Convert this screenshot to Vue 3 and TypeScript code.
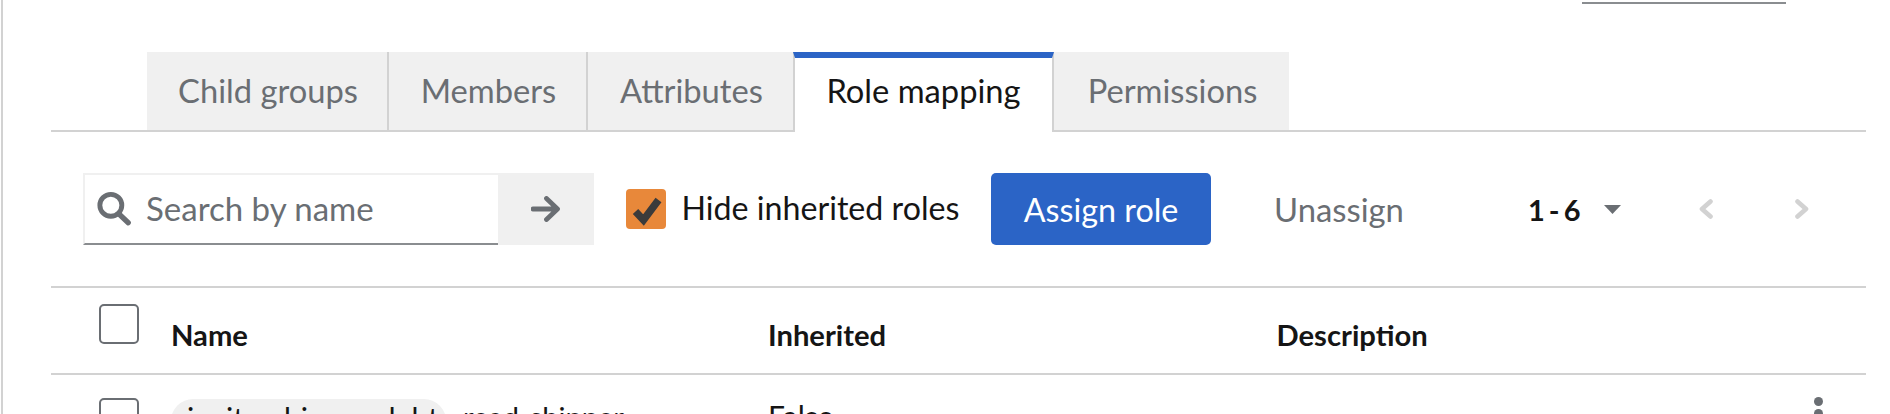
<script setup lang="ts">
const tabs: { label: string; active?: boolean }[] = [
  { label: 'Child groups' },
  { label: 'Members' },
  { label: 'Attributes' },
  { label: 'Role mapping', active: true },
  { label: 'Permissions' },
]
</script>

<template>
  <div class="page">
    <div class="top"><div class="top-rule"></div></div>

    <div class="tabs-bar">
      <div class="tabs">
        <div v-for="t in tabs" :key="t.label" class="tab" :class="{ active: t.active }">{{ t.label }}</div>
      </div>
    </div>

    <div class="toolbar">
      <div class="search">
        <div class="search-input">
          <svg class="search-icon" viewBox="0 0 36 36" width="38" height="38" aria-hidden="true">
            <circle cx="15" cy="14.5" r="10.4" fill="none" stroke="#6a6e73" stroke-width="4.6" />
            <path d="M23 23 L31.5 31" stroke="#6a6e73" stroke-width="5" stroke-linecap="round" fill="none" />
          </svg>
          <span class="placeholder">Search by name</span>
        </div>
        <div class="search-btn">
          <svg viewBox="0 0 30 26" width="30" height="26" aria-hidden="true">
            <path d="M2 13 H26 M15.5 2.5 L26.5 13 L15.5 23.5" fill="none" stroke="#6a6e73" stroke-width="4.8" stroke-linecap="round" stroke-linejoin="round" />
          </svg>
        </div>
      </div>

      <label class="hide">
        <span class="check-on">
          <svg viewBox="0 0 40 40" width="40" height="40" aria-hidden="true">
            <path d="M9.5 22.5 L17.5 31 L32.5 11" fill="none" stroke="#3b3b3b" stroke-width="7.4" />
          </svg>
        </span>
        <span class="hide-label">Hide inherited roles</span>
      </label>

      <button class="assign" type="button">Assign role</button>
      <span class="unassign">Unassign</span>

      <div class="pager">
        <span class="range">1 - 6</span>
        <svg class="caret" viewBox="0 0 17 9" width="17" height="9" aria-hidden="true"><path d="M0 0 H17 L8.5 9 Z" fill="#6a6e73" /></svg>
        <svg class="chev-l" viewBox="0 0 16 20" width="16" height="20" aria-hidden="true"><path d="M12.5 2.5 L4 10 L12.5 17.5" fill="none" stroke="#d2d2d2" stroke-width="4.6" stroke-linecap="round" stroke-linejoin="round" /></svg>
        <svg class="chev-r" viewBox="0 0 16 20" width="16" height="20" aria-hidden="true"><path d="M3.5 2.5 L12 10 L3.5 17.5" fill="none" stroke="#d2d2d2" stroke-width="4.6" stroke-linecap="round" stroke-linejoin="round" /></svg>
      </div>
    </div>

    <div class="table">
      <div class="row head">
        <span class="box"></span>
        <span class="th">Name</span>
        <span class="th">Inherited</span>
        <span class="th">Description</span>
        <span></span>
      </div>
      <div class="row body">
        <span class="box"></span>
        <span class="names"><span class="chip">invite-shipper-debtor</span><span class="role">read-shipper</span></span>
        <span class="td">False</span>
        <span></span>
        <span class="kebab"><i></i><i></i><i></i></span>
      </div>
    </div>
  </div>
</template>

<style>
html, body { margin: 0; background: #fff; overflow: hidden; }
</style>

<style scoped>
.page {
  box-sizing: border-box;
  width: 1889px;
  height: 414px;
  margin-left: 1px;
  overflow: hidden;
  border-left: 2px solid #d2d2d2;
  padding: 0 24px 0 48px;
  font-family: Lato, "Open Sans", sans-serif;
  color: #151515;
  background: #fff;
}
.top { height: 52px; display: flex; justify-content: flex-end; }
.top-rule { width: 204px; height: 2.5px; margin: 1.5px 80px 0 0; background: #8a8d90; }

.tabs-bar { border-bottom: 2px solid #d2d2d2; padding-left: 96px; }
.tabs { display: grid; grid-template-columns: 242px 199px 205px 261px 235px; width: max-content; height: 78px; }
.tab {
  display: flex; align-items: center; justify-content: center;
  background: #f0f0f0; color: #6a6e73; font-size: 32.7px;
  box-sizing: border-box; border-right: 2px solid #d2d2d2; padding: 0 0 2px 2px;
}
.tab:last-child { border-right: 0; }
.tab:nth-child(3) { border-right: 0; }
.tab.active {
  position: relative; background: #fff; color: #151515;
  border-top: 6px solid #2b64c6; border-left: 2px solid #d2d2d2; border-right: 2px solid #d2d2d2;
  margin-bottom: -2px; padding: 0 0 9px 0;
}

.toolbar { display: flex; align-items: center; height: 72px; margin-top: 41px; padding-left: 32px; }
.search { display: flex; height: 72px; width: 511px; flex: none; }
.search-input {
  flex: 1; box-sizing: border-box; display: flex; align-items: center;
  border-top: 2px solid #f0f0f0; border-left: 2px solid #f0f0f0; border-bottom: 2px solid #8a8d90;
}
.search-icon { margin-left: 10px; flex: none; }
.placeholder { margin-left: 13px; margin-top: -2px; font-size: 33px; color: #6a6e73; }
.search-btn { width: 96px; flex: none; background: #f0f0f0; display: flex; align-items: center; justify-content: center; }

.hide { display: flex; align-items: center; margin-left: 32px; width: 365px; flex: none; }
.check-on { width: 40px; height: 40px; background: #e8883a; border-radius: 4px; display: block; flex: none; }
.check-on svg { display: block; }
.hide-label { margin-left: 15.5px; font-size: 32.2px; margin-top: -4px; }

.assign {
  width: 220px; height: 72px; flex: none; border: 0; border-radius: 5px; background: #2b64c6; color: #fff;
  font: inherit; font-size: 32.3px; padding: 0;
}
.unassign { margin-left: 63px; width: 254px; flex: none; font-size: 32.8px; color: #6a6e73; }

.pager { display: flex; align-items: center; flex: none; }
.range { width: 76px; flex: none; font-size: 29px; font-weight: 700; word-spacing: -3px; }
.caret { flex: none; margin-right: 77px; }
.chev-r { margin-left: 80px; }

.table { margin-top: 41px; }
.row {
  display: grid;
  grid-template-columns: 72px 597px 508.5px 1fr 60px;
  padding-left: 48px;
  border-top: 2px solid #d2d2d2;
}
.head { height: 85px; align-items: start; }
.box {
  box-sizing: border-box; display: block; width: 40px; height: 40px; margin-top: 16px;
  border: 2px solid #6a6e73; border-radius: 5px;
}
.th { font-size: 29.2px; font-weight: 700; margin-top: 29px; }
.body { height: 60px; align-items: start; }
.body .box { margin-top: 23px; }
.names { display: flex; align-items: flex-start; margin-top: 24px; }
.chip {
  display: block; width: 275px; box-sizing: border-box; padding: 0 16px; height: 44px; line-height: 38px;
  background: #f0f0f0; border-radius: 22px; font-size: 30px; white-space: nowrap;
}
.role { margin-left: 17px; font-size: 29px; line-height: 35px; white-space: nowrap; }
.td { font-size: 30px; line-height: 35px; margin-top: 24px; }
.kebab { display: flex; flex-direction: column; align-items: center; gap: 3px; margin-top: 22px; margin-left: 7px; width: 10px; }
.kebab i { display: block; width: 9px; height: 9px; border-radius: 50%; background: #6a6e73; }
</style>
